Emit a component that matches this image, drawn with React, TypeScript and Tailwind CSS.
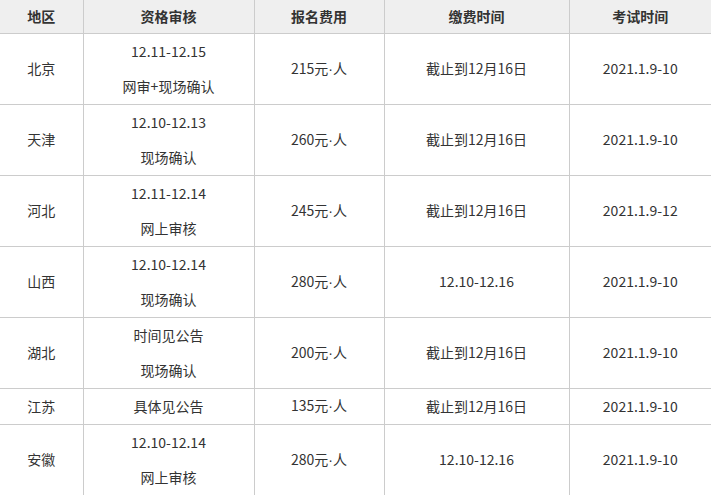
const rows: { area: string; review: string[]; fee: string; pay: string; exam: string }[] = [
  { area: '北京', review: ['12.11-12.15', '网审+现场确认'], fee: '215', pay: '截止到12月16日', exam: '2021.1.9-10' },
  { area: '天津', review: ['12.10-12.13', '现场确认'], fee: '260', pay: '截止到12月16日', exam: '2021.1.9-10' },
  { area: '河北', review: ['12.11-12.14', '网上审核'], fee: '245', pay: '截止到12月16日', exam: '2021.1.9-12' },
  { area: '山西', review: ['12.10-12.14', '现场确认'], fee: '280', pay: '12.10-12.16', exam: '2021.1.9-10' },
  { area: '湖北', review: ['时间见公告', '现场确认'], fee: '200', pay: '截止到12月16日', exam: '2021.1.9-10' },
  { area: '江苏', review: ['具体见公告'], fee: '135', pay: '截止到12月16日', exam: '2021.1.9-10' },
  { area: '安徽', review: ['12.10-12.14', '网上审核'], fee: '280', pay: '12.10-12.16', exam: '2021.1.9-10' },
]

const headers = ['地区', '资格审核', '报名费用', '缴费时间', '考试时间']

const App = () => {
  return (
    <div className="w-[711px] h-[495px] overflow-hidden bg-white text-[14px] text-[#333] font-['Noto_Sans_CJK_SC','Microsoft_YaHei',sans-serif]">
      <table className="w-[711px] border-collapse table-fixed">
        <colgroup>
          <col className="w-[83px]" />
          <col className="w-[171px]" />
          <col className="w-[130px]" />
          <col className="w-[185px]" />
          <col className="w-[142px]" />
        </colgroup>
        <thead>
          <tr className="bg-[#efefef] h-[33px]">
            {headers.map((h, i) => (
              <th
                key={h}
                className={`p-0 font-bold text-center border-b border-[#cccccc] ${i > 0 ? 'border-l' : ''}`}
              >
                {h}
              </th>
            ))}
          </tr>
        </thead>
        <tbody>
          {rows.map((r) => (
            <tr key={r.area}>
              <td className="p-0 text-center border-b border-[#cccccc]">{r.area}</td>
              <td className="p-0 text-center border-b border-l border-[#cccccc]">
                {r.review.map((line) => (
                  <p key={line} className="leading-[35px]">{line}</p>
                ))}
              </td>
              <td className="p-0 text-center border-b border-l border-[#cccccc]">
                {r.fee}元<span className="font-['Liberation_Sans',sans-serif]">·</span>人
              </td>
              <td className="p-0 text-center border-b border-l border-[#cccccc]">{r.pay}</td>
              <td className="p-0 text-center border-b border-l border-[#cccccc]">{r.exam}</td>
            </tr>
          ))}
        </tbody>
      </table>
    </div>
  )
}

export default App
